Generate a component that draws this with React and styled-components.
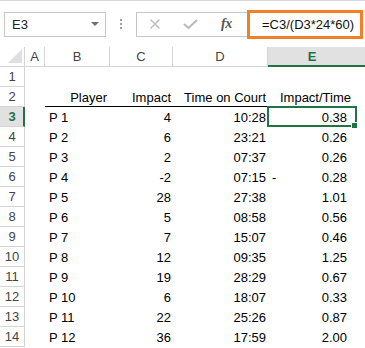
import React from "react";
import styled, { createGlobalStyle } from "styled-components";

const GREEN = "#217346";
const LINE = "#d4d4d4";
const COLS = "25px 20px 65px 63px 95px 88px 1fr";

const GlobalStyle = createGlobalStyle`
  html, body { margin: 0; padding: 0; background: #fff; }
  body { font-family: "Liberation Sans", Arial, sans-serif; }
`;

const Page = styled.div`
  width: 365px;
  height: 348px;
  overflow: hidden;
  background: #fff;
`;

const TopBar = styled.div`
  height: 47px;
  box-sizing: border-box;
  border-top: 1px solid #d9d9d9;
  display: flex;
  align-items: center;
  padding-left: 4px;
`;

const NameBox = styled.div`
  width: 102px;
  height: 25px;
  box-sizing: border-box;
  border: 1px solid #c6c6c6;
  display: flex;
  align-items: center;
  justify-content: space-between;
  padding: 0 6px 0 7px;
  font-size: 13px;
  color: #222;
`;

const Grip = styled.div`
  width: 30px;
  display: flex;
  flex-direction: column;
  align-items: center;
  gap: 2px;
`;

const Dot = styled.span`
  width: 2px;
  height: 2px;
  background: #a0a0a0;
`;

const ButtonsBox = styled.div`
  width: 111px;
  height: 25px;
  box-sizing: border-box;
  border: 1px solid #c6c6c6;
  border-right: 0;
  display: flex;
  align-items: center;
  padding-left: 13px;
  gap: 23px;
`;

const Fx = styled.span`
  font-family: "Liberation Serif", "Times New Roman", serif;
  font-style: italic;
  font-weight: bold;
  font-size: 14px;
  color: #555;
  letter-spacing: -0.5px;
  line-height: 1;
`;

const FormulaBox = styled.div`
  width: 116px;
  height: 29px;
  box-sizing: border-box;
  border: 3px solid #f37f26;
  display: flex;
  align-items: center;
  padding-left: 12px;
  font-size: 13px;
  color: #111;
  white-space: nowrap;
`;

const Row = styled.div`
  display: grid;
  grid-template-columns: ${COLS};
  height: 20px;
`;

const Corner = styled.div`
  box-sizing: border-box;
  border-right: 1px solid ${LINE};
  border-bottom: 1px solid ${LINE};
  display: flex;
  align-items: flex-end;
  justify-content: flex-end;
  padding: 0 2px 3px 0;
`;

const ColHead = styled.div`
  box-sizing: border-box;
  display: flex;
  align-items: center;
  justify-content: center;
  font-size: 13px;
  color: #444;
  border-right: ${(p) => (p.$last ? "0" : `1px solid ${LINE}`)};
  border-bottom: ${(p) => (p.$selected ? `2px solid ${GREEN}` : `1px solid ${LINE}`)};
  background: ${(p) => (p.$selected ? "#e1e1e1" : "#fff")};
  ${(p) => p.$selected && `color: ${GREEN}; font-weight: bold; padding: 1px 9px 0 0;`}
  grid-column: ${(p) => (p.$span ? `span ${p.$span}` : "auto")};
`;

const RowHead = styled.div`
  box-sizing: border-box;
  display: flex;
  align-items: center;
  justify-content: center;
  font-size: 13px;
  color: #444;
  border-bottom: 1px solid ${LINE};
  border-right: ${(p) => (p.$selected ? `2px solid ${GREEN}` : `1px solid ${LINE}`)};
  background: ${(p) => (p.$selected ? "#e1e1e1" : "#fff")};
  ${(p) => p.$selected && `color: ${GREEN}; font-weight: bold; padding-left: 1px;`}
`;

const Cell = styled.div`
  position: relative;
  box-sizing: border-box;
  display: flex;
  align-items: center;
  justify-content: ${(p) => p.$justify || "flex-end"};
  padding: 1px ${(p) => p.$pr ?? 2}px 0 ${(p) => p.$pl ?? 4}px;
  font-size: 13px;
  color: #000;
  white-space: nowrap;
  border-bottom: ${(p) => (p.$underline ? "1px solid #000" : "0")};
`;

const Selection = styled.div`
  position: absolute;
  top: -1px;
  left: -1px;
  right: -1px;
  bottom: 0;
  border: 2px solid ${GREEN};
  pointer-events: none;
`;

const Handle = styled.span`
  position: absolute;
  right: -3px;
  bottom: -4px;
  width: 5px;
  height: 5px;
  background: ${GREEN};
  border: 1px solid #fff;
`;

const data = [
  ["P 1", "4", "10:28", "0.38"],
  ["P 2", "6", "23:21", "0.26"],
  ["P 3", "2", "07:37", "0.26"],
  ["P 4", "-2", "07:15", "0.28", true],
  ["P 5", "28", "27:38", "1.01"],
  ["P 6", "5", "08:58", "0.56"],
  ["P 7", "7", "15:07", "0.46"],
  ["P 8", "12", "09:35", "1.25"],
  ["P 9", "19", "28:29", "0.67"],
  ["P 10", "6", "18:07", "0.33"],
  ["P 11", "22", "25:26", "0.87"],
  ["P 12", "36", "17:59", "2.00"],
];

export default function App() {
  return (
    <Page>
      <GlobalStyle />
      <TopBar>
        <NameBox>
          <span>E3</span>
          <svg width="8" height="4" viewBox="0 0 8 4">
            <polygon points="0,0 8,0 4,4" fill="#707070" />
          </svg>
        </NameBox>
        <Grip>
          <Dot />
          <Dot />
          <Dot />
        </Grip>
        <ButtonsBox>
          <svg width="10" height="10" viewBox="0 0 10 10">
            <path d="M0.5 0.5 L9.5 9.5 M9.5 0.5 L0.5 9.5" stroke="#b8b8b8" strokeWidth="1.3" />
          </svg>
          <svg width="15" height="10" viewBox="0 0 15 10">
            <polyline points="1,5 5.5,9 14,1" fill="none" stroke="#b8b8b8" strokeWidth="2" />
          </svg>
          <Fx>fx</Fx>
        </ButtonsBox>
        <FormulaBox>=C3/(D3*24*60)</FormulaBox>
      </TopBar>

      <Row>
        <Corner>
          <svg width="14" height="14" viewBox="0 0 14 14">
            <polygon points="14,0 14,14 0,14" fill="#dfdfdf" />
          </svg>
        </Corner>
        <ColHead>A</ColHead>
        <ColHead>B</ColHead>
        <ColHead>C</ColHead>
        <ColHead>D</ColHead>
        <ColHead $selected $span={2} $last>E</ColHead>
      </Row>

      <Row>
        <RowHead>1</RowHead>
      </Row>
      <Row>
        <RowHead>2</RowHead>
        <Cell />
        <Cell $underline $pr={3}>Player</Cell>
        <Cell $underline>Impact</Cell>
        <Cell $underline>Time on Court</Cell>
        <Cell $underline $pr={5}>Impact/Time</Cell>
      </Row>
      {data.map(([p, impact, time, ratio, neg], i) => {
        const n = i + 3;
        const sel = n === 3;
        return (
          <Row key={p}>
            <RowHead $selected={sel}>{n}</RowHead>
            <Cell />
            <Cell $justify="flex-start">{p}</Cell>
            <Cell>{impact}</Cell>
            <Cell>{time}</Cell>
            <Cell $pr={9} $justify={neg ? "space-between" : "flex-end"}>
              {neg && <span>-</span>}
              <span>{ratio}</span>
              {sel && (
                <Selection>
                  <Handle />
                </Selection>
              )}
            </Cell>
          </Row>
        );
      })}
    </Page>
  );
}
